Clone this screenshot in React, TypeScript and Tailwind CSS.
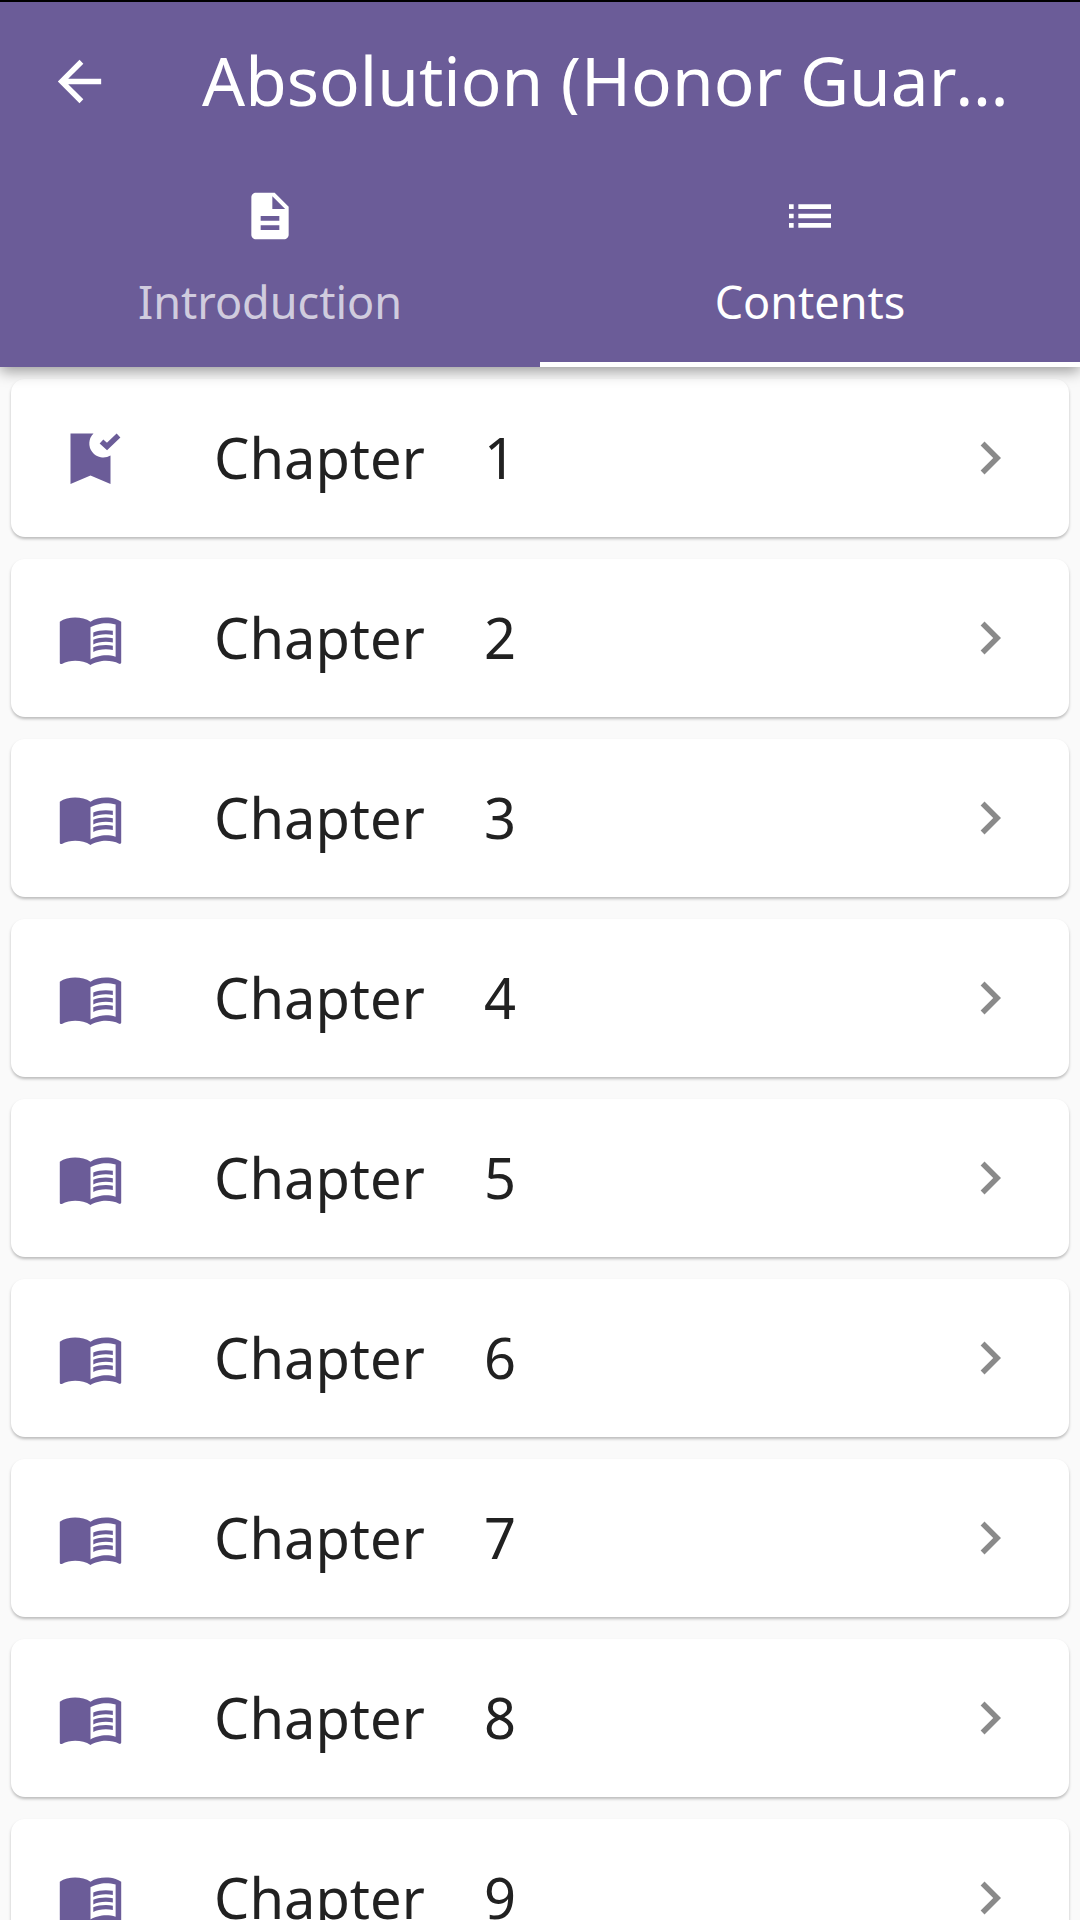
import React from 'react';

const font = { fontFamily: '"Noto Sans", sans-serif' };

const ArrowBack = () => (
    <svg viewBox="0 0 24 24" className="w-[65px] h-[65px] fill-white">
        <path d="M20 11H7.83l5.59-5.59L12 4l-8 8 8 8 1.41-1.41L7.83 13H20v-2z" />
    </svg>
);

const DescriptionIcon = () => (
    <svg viewBox="0 0 24 24" className="w-14 h-14 fill-white">
        <path d="M14 2H6c-1.1 0-1.99.9-1.99 2L4 20c0 1.1.89 2 1.99 2H18c1.1 0 2-.9 2-2V8l-6-6zm2 16H8v-2h8v2zm0-4H8v-2h8v2zm-3-5V3.5L18.5 9H13z" />
    </svg>
);

const ListIcon = () => (
    <svg viewBox="0 0 24 24" className="w-14 h-14 fill-white">
        <path d="M3 13h2v-2H3v2zm0 4h2v-2H3v2zm0-8h2V7H3v2zm4 4h14v-2H7v2zm0 4h14v-2H7v2zM7 7v2h14V7H7z" />
    </svg>
);

const BookIcon = () => (
    <svg viewBox="0 0 24 24" className="w-[67px] h-[67px] fill-[#6b5c98]">
        <path d="M21 5c-1.11-.35-2.33-.5-3.5-.5-1.95 0-4.05.4-5.5 1.5-1.45-1.1-3.55-1.5-5.5-1.5S2.45 4.9 1 6v14.65c0 .25.25.5.5.5.1 0 .15-.05.25-.05C3.1 20.45 5.05 20 6.5 20c1.95 0 4.05.4 5.5 1.5 1.35-.85 3.8-1.5 5.5-1.5 1.65 0 3.35.3 4.75 1.05.1.05.15.05.25.05.25 0 .5-.25.5-.5V6c-.6-.45-1.25-.75-2-1zm0 13.5c-1.1-.35-2.3-.5-3.5-.5-1.7 0-4.15.65-5.5 1.5V8c1.35-.85 3.8-1.5 5.5-1.5 1.2 0 2.4.15 3.5.5v11.5z" />
        <path d="M17.5 10.5c.88 0 1.73.09 2.5.26V9.24c-.79-.15-1.64-.24-2.5-.24-1.7 0-3.24.29-4.5.83v1.66c1.13-.64 2.7-.99 4.5-.99zM13 12.49v1.66c1.13-.64 2.7-.99 4.5-.99.88 0 1.73.09 2.5.26V11.9c-.79-.15-1.64-.24-2.5-.24-1.7 0-3.24.3-4.5.83zM17.5 14.33c-1.7 0-3.24.29-4.5.83v1.66c1.13-.64 2.7-.99 4.5-.99.88 0 1.73.09 2.5.26v-1.52c-.79-.16-1.64-.24-2.5-.24z" />
    </svg>
);

const BookmarkDoneIcon = () => (
    <svg viewBox="0 0 67 67" className="w-[67px] h-[67px]">
        <path className="fill-[#6b5c98]" d="M13.5 8.5H36.5A14 14 0 0 0 53.5 30.5V59L33.5 50.5L13.5 59Z" />
        <path className="stroke-[#6b5c98] fill-none" strokeWidth="5.5" d="M44.5 16.5L50 21.5L61.5 10.5" />
    </svg>
);

const ChevronIcon = () => (
    <svg viewBox="0 0 24 24" className="w-[66px] h-[66px] fill-[#8a8a8a]">
        <path d="M10 6L8.59 7.41 13.17 12l-4.58 4.59L10 18l6-6z" />
    </svg>
);

const chapters = [1, 2, 3, 4, 5, 6, 7, 8, 9];

export default function App() {
    return (
        <div className="w-[1080px] h-[1920px] overflow-hidden bg-[#fafafa] flex flex-col" style={font}>
            <div className="h-[2px] bg-black shrink-0" />
            <header className="relative z-10 bg-[#6b5c98] shrink-0 shadow-[0_4px_14px_rgba(0,0,0,0.4)]">
                <div className="h-[158px] flex items-center text-white">
                    <div className="ml-[47px] w-[155px] shrink-0">
                        <ArrowBack />
                    </div>
                    <h1 className="w-[812px] truncate text-[67.5px] leading-none font-normal">
                        Absolution (Honor Guard Series)
                    </h1>
                </div>
                <div className="grid grid-cols-2 h-[207px]">
                    <div className="flex flex-col items-center pt-7 text-white/70">
                        <DescriptionIcon />
                        <span className="mt-[32px] text-[45px] leading-[52px]">Introduction</span>
                    </div>
                    <div className="flex flex-col items-center pt-7 text-white relative">
                        <ListIcon />
                        <span className="mt-[32px] text-[45px] leading-[52px]">Contents</span>
                        <div className="absolute left-0 right-0 bottom-0 h-[5px] bg-white" />
                    </div>
                </div>
            </header>
            <main className="flex flex-col gap-[22px] px-[11px] pt-[12px]">
                {chapters.map((n) => (
                    <div
                        key={n}
                        className="h-[158px] shrink-0 flex items-center bg-white rounded-[14px] shadow-[0_2px_3px_rgba(0,0,0,0.25)]"
                    >
                        <div className="ml-[45.5px] w-[67px] shrink-0">
                            {n === 1 ? <BookmarkDoneIcon /> : <BookIcon />}
                        </div>
                        <div className="ml-[90.5px] mb-[2px] flex-1 flex text-[56px] leading-none text-[#212121]">
                            <span className="w-[270px]">Chapter</span>
                            <span>{n}</span>
                        </div>
                        <div className="mr-[46px] shrink-0">
                            <ChevronIcon />
                        </div>
                    </div>
                ))}
            </main>
        </div>
    );
}
